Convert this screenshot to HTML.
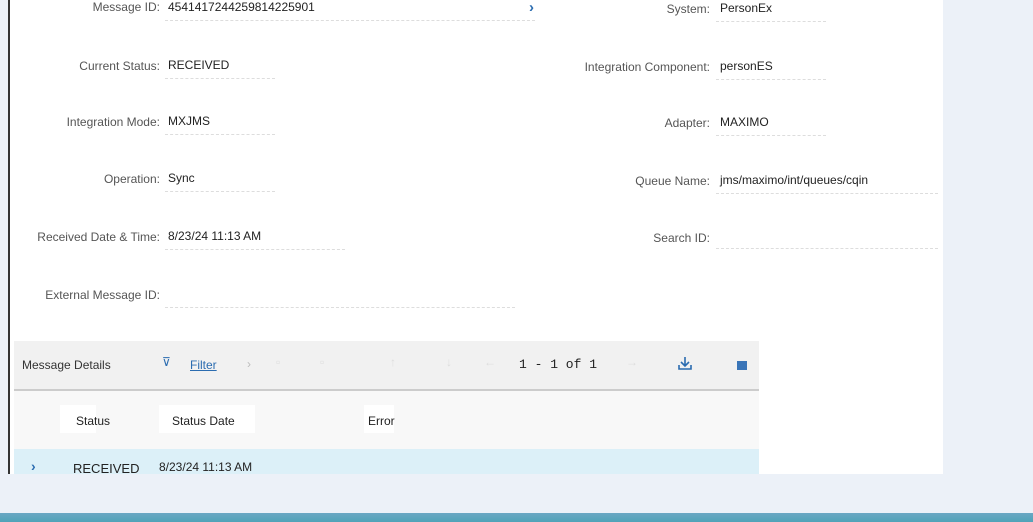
<!DOCTYPE html>
<html><head><style>
body{margin:0;width:1033px;height:522px;overflow:hidden;background:#ecf1f8;font-family:"Liberation Sans",sans-serif;font-size:12px;color:#222;position:relative}
.panel{position:absolute;left:8px;top:0;width:933px;height:474px;background:#fff;border-left:2px solid #333}
.l{position:absolute;text-align:right;color:#555;width:300px}
.v{position:absolute;color:#222}
.u{position:absolute;border-bottom:1px dashed #ddd;height:0}
.tb{position:absolute;left:14px;top:341px;width:745px;height:48px;background:#f1f1f1;border-bottom:2px solid #ccc}
.hd{position:absolute;left:14px;top:391px;width:745px;height:58px;background:#f8f8f8}
.row{position:absolute;left:14px;top:449px;width:745px;height:25px;background:#dcf0f8}
.t{position:absolute}
.strip{position:absolute;left:0;top:513px;width:1033px;height:9px;background:linear-gradient(#6aa7c4,#4fa3b8)}
</style></head><body>
<div class="panel"></div>
<div class="l" style="left:-140px;top:0">Message ID:</div><div class="v" style="left:168px;top:0">4541417244259814225901</div><div class="u" style="left:165px;top:20px;width:370px"></div>
<div class="v" style="left:529px;top:-1px;color:#2b6cb0;font-weight:bold;font-size:15px">›</div>
<div class="l" style="left:-140px;top:59px">Current Status:</div><div class="v" style="left:168px;top:58px">RECEIVED</div><div class="u" style="left:165px;top:78px;width:110px"></div>
<div class="l" style="left:-140px;top:115px">Integration Mode:</div><div class="v" style="left:168px;top:114px">MXJMS</div><div class="u" style="left:165px;top:134px;width:110px"></div>
<div class="l" style="left:-140px;top:172px">Operation:</div><div class="v" style="left:168px;top:171px">Sync</div><div class="u" style="left:165px;top:191px;width:110px"></div>
<div class="l" style="left:-140px;top:230px">Received Date &amp; Time:</div><div class="v" style="left:168px;top:229px">8/23/24 11:13 AM</div><div class="u" style="left:165px;top:249px;width:180px"></div>
<div class="l" style="left:-140px;top:288px">External Message ID:</div><div class="u" style="left:165px;top:307px;width:350px"></div>
<div class="l" style="left:410px;top:2px">System:</div><div class="v" style="left:720px;top:1px">PersonEx</div><div class="u" style="left:716px;top:21px;width:110px"></div>
<div class="l" style="left:410px;top:60px">Integration Component:</div><div class="v" style="left:720px;top:59px">personES</div><div class="u" style="left:716px;top:79px;width:110px"></div>
<div class="l" style="left:410px;top:116px">Adapter:</div><div class="v" style="left:720px;top:115px">MAXIMO</div><div class="u" style="left:716px;top:135px;width:110px"></div>
<div class="l" style="left:410px;top:174px">Queue Name:</div><div class="v" style="left:720px;top:173px">jms/maximo/int/queues/cqin</div><div class="u" style="left:716px;top:193px;width:222px"></div>
<div class="l" style="left:410px;top:231px">Search ID:</div><div class="u" style="left:716px;top:248px;width:222px"></div>
<div class="tb"></div>
<div class="t" style="left:22px;top:358px;color:#333">Message Details</div>
<div class="t" style="left:162px;top:355px;color:#2b6cb0">⊽</div>
<div class="t" style="left:190px;top:358px;color:#2b6cb0;text-decoration:underline">Filter</div>
<div class="t" style="left:247px;top:357px;color:#bbb">›</div>
<div class="t" style="left:276px;top:355px;color:#ddd">▫</div><div class="t" style="left:320px;top:355px;color:#ddd">▫</div>
<div class="t" style="left:390px;top:355px;color:#ddd">↑</div><div class="t" style="left:446px;top:355px;color:#ddd">↓</div><div class="t" style="left:484px;top:355px;color:#ddd">←</div>
<div class="t" style="left:519px;top:357px;font-family:'Liberation Mono',monospace;font-size:13px">1 - 1 of 1</div>
<div class="t" style="left:626px;top:355px;color:#ddd">→</div>
<svg class="t" style="left:677px;top:355px" width="16" height="16"><path d="M8 2v8M4 7l4 4 4-4M2 10v4h12v-4" stroke="#2b6cb0" stroke-width="1.6" fill="none"/></svg>
<div class="t" style="left:737px;top:361px;width:10px;height:9px;background:#3a75b8"></div>
<div class="hd"></div>
<div class="t" style="left:60px;top:405px;width:36px;height:28px;background:#fff"></div><div class="t" style="left:76px;top:414px">Status</div>
<div class="t" style="left:159px;top:405px;width:96px;height:28px;background:#fff"></div><div class="t" style="left:172px;top:414px">Status Date</div>
<div class="t" style="left:364px;top:405px;width:30px;height:28px;background:#fff"></div><div class="t" style="left:368px;top:414px">Error</div>
<div class="row"></div>
<div class="t" style="left:31px;top:458px;color:#2b6cb0;font-weight:bold;font-size:14px">›</div>
<div class="t" style="left:73px;top:461px;font-size:13px">RECEIVED</div>
<div class="t" style="left:159px;top:460px">8/23/24 11:13 AM</div>
<div class="strip"></div>
</body></html>
